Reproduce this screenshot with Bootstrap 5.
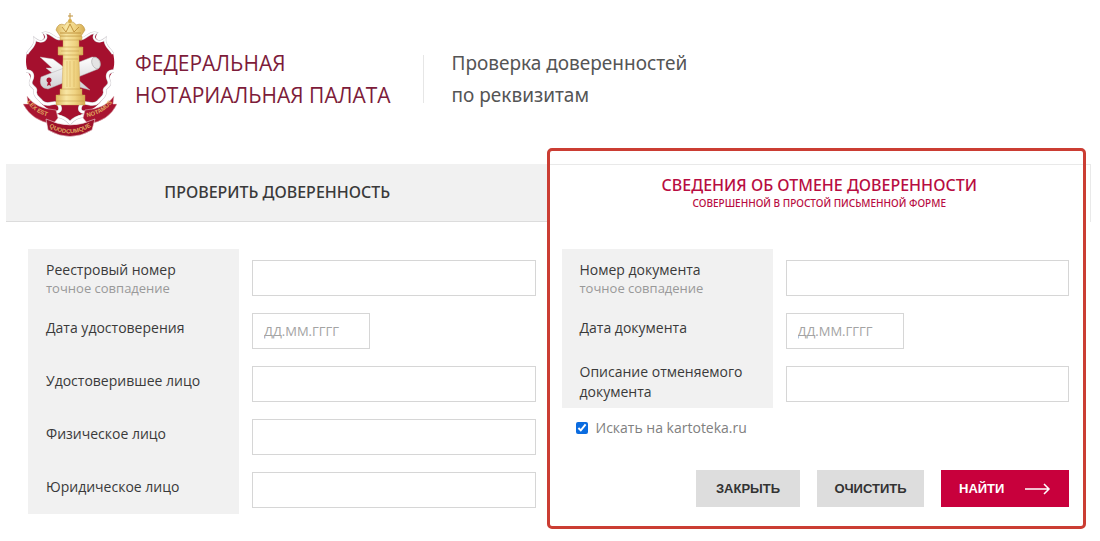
<!DOCTYPE html>
<html lang="ru">
<head>
<meta charset="utf-8">
<meta name="viewport" content="width=device-width, initial-scale=1">
<title>Проверка доверенностей по реквизитам</title>
<link href="https://cdn.jsdelivr.net/npm/bootstrap@5.3.0/dist/css/bootstrap.min.css" rel="stylesheet">
<style>
  body { font-family: "Open Sans", "Noto Sans", sans-serif; font-size: 14px; line-height: 20px; color: #3a3a3a; background: #fff; }
  .page { padding: 0 9px 28px 6px; }
  .masthead { min-height: 164px; padding: 12px 17px 26px; }
  .emblem { width: 94px; height: 126px; flex: none; }
  .org-name { font-size: 21px; line-height: 32px; color: #7d1c3a; margin: 7px 0 0 18px; }
  .service { font-family: "Noto Sans", sans-serif; font-size: 19px; line-height: 32px; color: #555; border-left: 1px solid #e6e6e6; margin: 7px 0 0 32px; }
  .service h1 { font: inherit; margin: -8px 0 -8px 28px; }
  .tab-title { height: 58px; font-family: "Noto Sans", sans-serif; font-size: 16px; font-weight: 500; }
  .tab-title a { color: inherit; text-decoration: none; }
  .tab-idle { background: #f1f1f1; border-bottom: 1px solid #dcdcdc; }
  .tab-open { color: #b80d42; border: 1px solid #e9e9e9; border-width: 1px 1px 0 0; }
  .tab-note { font-size: 10px; line-height: 16px; }
  .form-left { padding: 27px 13px 0 22px; }
  .form-right { padding: 27px 22px 0 13px; }
  .line { min-height: 53px; gap: 13px; }
  .line > label { flex: 0 0 211px; background: #f1f1f1; padding: 16px 18px 0; }
  .line > label.double { padding-top: 11px; }
  .line > label.long { padding-top: 7px; }
  .hint { font-size: 13px; line-height: 16px; color: #999; }
  .line .form-control { height: 36px; margin-top: 11px; border: 1px solid #d6d6d6; border-radius: 0; min-width: 0; font-size: 13px; padding: 0 11px; }
  .line .date { width: 118px; }
  .form-control::placeholder { color: #a3a3a3; }
  .search-in { padding: 10px 0 0 14px; gap: 8px; color: #808080; }
  .search-in input { width: 12px; height: 12px; margin: 0; accent-color: #0b6ce0; }
  .actions { gap: 17px; padding-top: 32px; }
  .actions .btn { height: 37px; border: 0; border-radius: 0; padding: 0; font: bold 13px "Liberation Sans", sans-serif; background: #ddd; color: #333; }
  .actions .btn-close-form { width: 104px; }
  .actions .btn-clear { width: 107px; }
  .actions .btn-find { width: 128px; background: #c8003c; color: #fff; }
  .actions .btn-find span { padding-left: 2px; }
  .highlight { position: absolute; inset: -16px 5px -15px -2px; border: 3px solid #cb3d33; border-radius: 5px; pointer-events: none; }
</style>
</head>
<body>
<div class="page container-fluid">
  <header class="masthead d-flex align-items-center">
    <svg class="emblem" viewBox="13 7 94 126" role="img" aria-label="Эмблема Федеральной нотариальной палаты">
      <defs>
        <linearGradient id="gold"><stop offset="0" stop-color="#dcb75f"/><stop offset=".35" stop-color="#f8e6a4"/><stop offset=".65" stop-color="#f0d483"/><stop offset="1" stop-color="#d4ab51"/></linearGradient>
        <linearGradient id="silver" x2="0" y2="1"><stop offset="0" stop-color="#fff"/><stop offset="1" stop-color="#d0d0d4"/></linearGradient>
        <path id="arcL" d="M17 97Q27 111 43 112"/>
        <path id="arcM" d="M39 122Q60 135 82 121"/>
        <path id="arcR" d="M77 112Q95 109 105 94"/>
      </defs>
      <path d="M48 33C41 31 40 27 33 29 36 34 32 38 25 34 26 40 20 43 17 48 15 56 16 64 20 71L26 92Q34 104 48 109L60 117 72 109Q87 104 94 92L100 71C105 64 105 56 103 48 100 43 95 41 96 34 88 38 84 34 87 29 80 27 79 31 72 33Z" fill="#a5102e"/>
      <path d="M50 34C43 34 41 26 34 28 40 33 32 40 25 34 26 41 20 43 17 49M70 34C77 34 79 26 86 28 80 33 88 40 95 34 94 41 100 43 103 49" fill="none" stroke="#c9c5ca" stroke-width="2.600"/>
      <path d="M50 34C43 34 41 26 34 28 40 33 32 40 25 34 26 41 20 43 17 49M70 34C77 34 79 26 86 28 80 33 88 40 95 34 94 41 100 43 103 49" fill="none" stroke="#fff" stroke-width="1.600"/>
      <path d="M16 66C22 66 24 70 21 76 18 82 28 82 25 87 25 92 29 93 32 97 38 103 45 94 49 100 52 105 49 108 44 107M104 66C98 66 96 70 99 76 102 82 92 82 95 87 95 92 91 93 88 97 82 103 75 94 71 100 68 105 71 108 76 107M47 111Q55 112 60 118 65 112 73 111" fill="none" stroke="#c9c5ca" stroke-width="3.600"/>
      <path d="M16 66C22 66 24 70 21 76 18 82 28 82 25 87 25 92 29 93 32 97 38 103 45 94 49 100 52 105 49 108 44 107M104 66C98 66 96 70 99 76 102 82 92 82 95 87 95 92 91 93 88 97 82 103 75 94 71 100 68 105 71 108 76 107M47 111Q55 112 60 118 65 112 73 111" fill="none" stroke="#fff" stroke-width="2.600"/>
      <path d="M30 52L43 54 51 60 80 85 69 82 57 74 47 72 36 63 42 63Z" fill="url(#silver)" stroke="#bbb" stroke-width=".4"/>
      <path d="M31 72L82 52Q91 52 90 60L88 64 38 84Q28 83 31 72Z" fill="url(#silver)" stroke="#b2b2b5" stroke-width=".5"/>
      <ellipse cx="86" cy="58" rx="4" ry="6" transform="rotate(-22 86 58)" fill="#e4e4e4" stroke="#aaa" stroke-width=".6"/>
      <circle cx="39" cy="75" r="2.500" fill="#a91531"/><path d="M38 77l-1 4 2-1 2 1-1-4" fill="#a91531"/>
      <path d="M50 31h22v4h-3v7h4v8h-4v5l1 29h2v6h3v10H46V90h4v-6h2l1-29v-5h-5v-8h5v-7h-3Z" fill="url(#gold)" stroke="#c9a04b" stroke-width=".4"/>
      <path d="M50 35h21M48 42h24M51 46h18M49 50h23M53 54h15M51 84h19M48 90h25M46 96h28" stroke="#bc9040" stroke-width=".5"/>
      <path d="M57 56v26M60 56v26M64 56v26" stroke="#d8b45e" stroke-width=".6"/>
      <path d="M50 31L46 25Q48 17 55 20 57 15 60 18 63 15 66 20 73 17 75 25L71 31Z" fill="url(#gold)" stroke="#bd933f" stroke-width=".6"/>
      <path d="M60 8v9M58 11h5M50 28h21M52 22l4 5 4-8 4 8 5-5" fill="none" stroke="#c1943f" stroke-width="1"/>
      <circle cx="60" cy="16" r="2" fill="#d9ae49"/>
      <path d="M17 91Q26 104 46 105L48 113 43 119Q22 116 13 99L18 99Z" fill="#a91531" stroke="#e6c8c8" stroke-width=".5"/>
      <path d="M104 91Q95 104 75 105L73 113 78 119Q99 116 107 99L103 99Z" fill="#a91531" stroke="#e6c8c8" stroke-width=".5"/>
      <path d="M36 114Q60 126 85 114L82 125Q60 138 38 125Z" fill="#9c112b" stroke="#efdada" stroke-width=".6"/>
      <g font-family="Liberation Sans, sans-serif" font-weight="700" font-size="6" fill="#e1ab62">
        <text><textPath href="#arcL">LEX EST</textPath></text>
        <text><textPath href="#arcM">QUODCUMQUE</textPath></text>
        <text><textPath href="#arcR">NOTAMUS</textPath></text>
      </g>
    </svg>
    <p class="org-name">ФЕДЕРАЛЬНАЯ<br>НОТАРИАЛЬНАЯ ПАЛАТА</p>
    <div class="service"><h1>Проверка доверенностей<br>по реквизитам</h1></div>
  </header>

  <main class="row g-0">
    <section class="col-6">
      <h2 class="tab-title tab-idle d-flex align-items-center justify-content-center m-0"><a href="#check">ПРОВЕРИТЬ ДОВЕРЕННОСТЬ</a></h2>
      <form class="form-left" id="check">
        <div class="line d-flex"><label for="reg" class="double">Реестровый номер<span class="hint d-block">точное совпадение</span></label><input class="form-control" id="reg" type="text"></div>
        <div class="line d-flex"><label for="cdate">Дата удостоверения</label><input class="form-control date" id="cdate" type="text" placeholder="ДД.ММ.ГГГГ"></div>
        <div class="line d-flex"><label for="notary">Удостоверившее лицо</label><input class="form-control" id="notary" type="text"></div>
        <div class="line d-flex"><label for="person">Физическое лицо</label><input class="form-control" id="person" type="text"></div>
        <div class="line d-flex"><label for="company">Юридическое лицо</label><input class="form-control" id="company" type="text"></div>
      </form>
    </section>

    <section class="col-6 position-relative">
      <h2 class="tab-title tab-open d-flex flex-column align-items-center justify-content-center m-0"><a href="#revoked">СВЕДЕНИЯ ОБ ОТМЕНЕ ДОВЕРЕННОСТИ</a><span class="tab-note">СОВЕРШЕННОЙ В ПРОСТОЙ ПИСЬМЕННОЙ ФОРМЕ</span></h2>
      <form class="form-right" id="revoked">
        <div class="line d-flex"><label for="docnum" class="double">Номер документа<span class="hint d-block">точное совпадение</span></label><input class="form-control" id="docnum" type="text"></div>
        <div class="line d-flex"><label for="docdate">Дата документа</label><input class="form-control date" id="docdate" type="text" placeholder="ДД.ММ.ГГГГ"></div>
        <div class="line d-flex"><label for="docdesc" class="long">Описание отменяемого документа</label><input class="form-control" id="docdesc" type="text"></div>
        <div class="search-in d-flex align-items-center"><input type="checkbox" id="kartoteka" checked><label for="kartoteka">Искать на kartoteka.ru</label></div>
        <div class="actions d-flex justify-content-end">
          <button type="button" class="btn btn-close-form">ЗАКРЫТЬ</button>
          <button type="reset" class="btn btn-clear">ОЧИСТИТЬ</button>
          <button type="submit" class="btn btn-find d-flex align-items-center justify-content-between px-3"><span>НАЙТИ</span>
            <svg width="28" height="12" viewBox="0 0 28 12" fill="none" stroke="#fff" stroke-width="1.500" aria-hidden="true"><path d="M0 6h24M19 1l5 5-5 5"/></svg>
          </button>
        </div>
      </form>
      <div class="highlight"></div>
    </section>
  </main>
</div>
<script src="https://cdn.jsdelivr.net/npm/bootstrap@5.3.0/dist/js/bootstrap.bundle.min.js"></script>
</body>
</html>
